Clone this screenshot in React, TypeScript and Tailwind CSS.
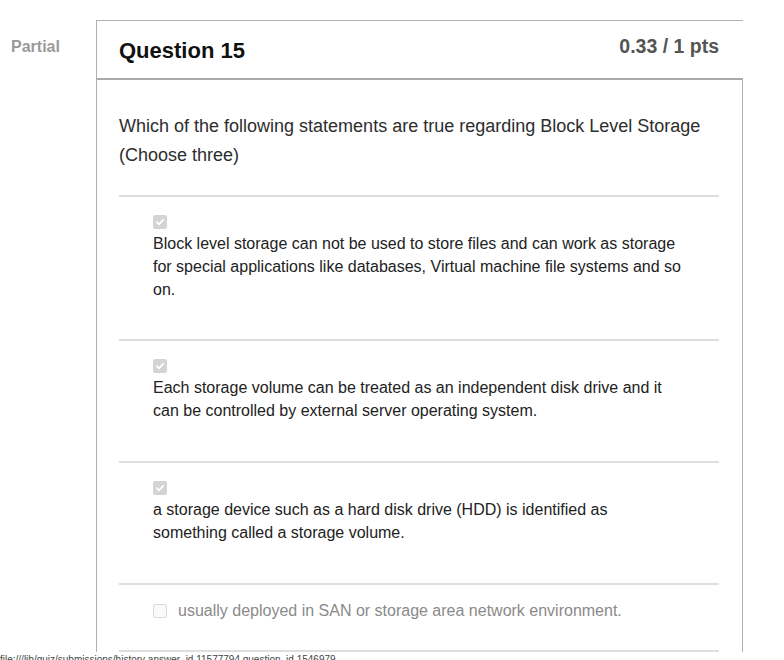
const answers = [
  {
    text: "Block level storage can not be used to store files and can work as storage for special applications like databases, Virtual machine file systems and so on.",
    checked: true,
  },
  {
    text: "Each storage volume can be treated as an independent disk drive and it can be controlled by external server operating system.",
    checked: true,
  },
  {
    text: "a storage device such as a hard disk drive (HDD) is identified as something called a storage volume.",
    checked: true,
  },
];

function CheckedBox() {
  return (
    <span className="flex h-[14px] w-[14px] items-center justify-center rounded-[2px] bg-[#d4d4d4]">
      <svg width="10" height="10" viewBox="0 0 10 10" fill="none">
        <path d="M1.8 5.2 L4 7.4 L8.3 2.6" stroke="#fff" strokeWidth="1.7" strokeLinecap="round" strokeLinejoin="round" />
      </svg>
    </span>
  );
}

export default function App() {
  return (
    <div className="relative h-[660px] w-[784px] overflow-hidden bg-white font-['Liberation_Sans',Arial,sans-serif]">
      <div className="flex pt-5">
        <div className="w-[96px] shrink-0 pl-[11px] pt-[15px]">
          <span className="text-[16px] font-bold text-[#9a9a9a]">Partial</span>
        </div>

        <div className="w-[647px] border-l border-t border-[#b0b0b0]">
          <div className="flex h-[59px] items-start justify-between border-b-2 border-[#ababab] pl-[22px] pr-[24px]">
            <h2 className="mt-[17px] text-[22px] font-bold leading-[25px] text-[#111]">Question 15</h2>
            <span className="mt-[14px] text-[19.5px] font-bold leading-[22px] text-[#555]">0.33 / 1 pts</span>
          </div>

          <div className="h-[572px] border-r border-[#b0b0b0] pl-[22px] pr-[23px] pt-[32px]">
            <p className="text-[18px] leading-[29px] text-[#2d2d2d]">
              Which of the following statements are true regarding Block Level Storage (Choose three)
            </p>

            <div className="mt-[25px]">
              {answers.map((a, i) => (
                <div
                  key={a.text}
                  className={
                    i === 0
                      ? "border-t-2 border-[#dedede] pb-[38px] pl-[34px] pr-[34px] pt-[18px]"
                      : "border-t-2 border-[#dedede] pb-[39px] pl-[34px] pr-[34px] pt-[18px]"
                  }
                >
                  <CheckedBox />
                  <p className="mt-[3px] text-[16px] leading-[23px] text-[#222]">{a.text}</p>
                </div>
              ))}
              <div className="border-y-2 border-[#dedede] pb-[28px] pl-[34px] pt-[14px]">
                <div className="flex h-[23px] items-center gap-[11px]">
                  <span className="h-[14px] w-[14px] rounded-[2px] border border-[#dcdcdc] bg-[#fafafa]" />
                  <span className="text-[16px] text-[#8a8a8a]">
                    usually deployed in SAN or storage area network environment.
                  </span>
                </div>
              </div>
            </div>
          </div>
        </div>
      </div>

      <div className="absolute left-0 top-[654px] whitespace-nowrap text-[10px] leading-[12px] text-[#444]">
        file:///lib/quiz/submissions/history answer_id 11577794 question_id 1546979
      </div>
    </div>
  );
}
